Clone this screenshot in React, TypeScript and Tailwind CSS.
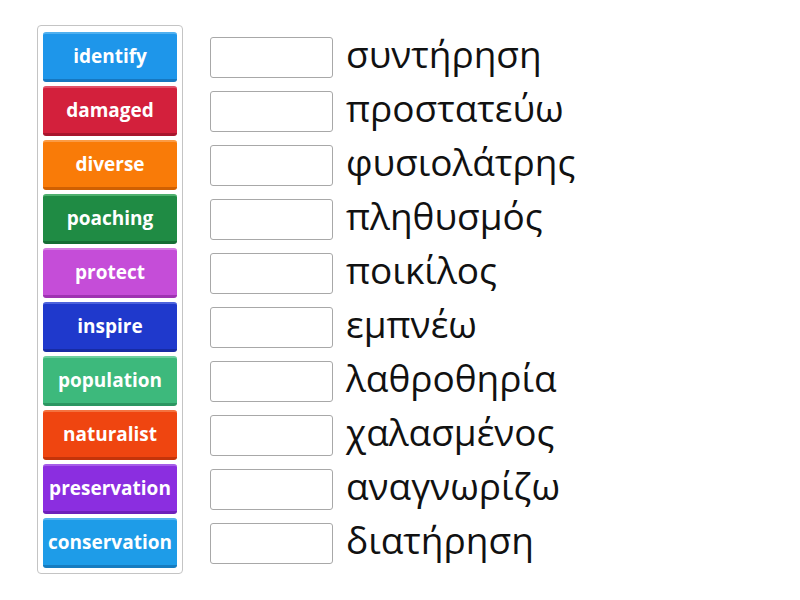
import React from 'react'

const words = [
  { label: 'identify', bg: 'bg-[#1e96ea]', top: 'border-t-[#4fb0f0]', bottom: 'border-b-[#1677c0]' },
  { label: 'damaged', bg: 'bg-[#d3203c]', top: 'border-t-[#e05067]', bottom: 'border-b-[#a8152d]' },
  { label: 'diverse', bg: 'bg-[#f97b08]', top: 'border-t-[#fb9b45]', bottom: 'border-b-[#d06002]' },
  { label: 'poaching', bg: 'bg-[#1f8b44]', top: 'border-t-[#4fb06e]', bottom: 'border-b-[#156c33]' },
  { label: 'protect', bg: 'bg-[#c54dd8]', top: 'border-t-[#d57ce3]', bottom: 'border-b-[#9f33b2]' },
  { label: 'inspire', bg: 'bg-[#1f39cc]', top: 'border-t-[#4d63dc]', bottom: 'border-b-[#172ba3]' },
  { label: 'population', bg: 'bg-[#3db97c]', top: 'border-t-[#6dcf9e]', bottom: 'border-b-[#2b9661]' },
  { label: 'naturalist', bg: 'bg-[#ef4510]', top: 'border-t-[#f4723f]', bottom: 'border-b-[#c4340a]' },
  { label: 'preservation', bg: 'bg-[#8b2ee0]', top: 'border-t-[#a75ee8]', bottom: 'border-b-[#6d1fbb]' },
  { label: 'conservation', bg: 'bg-[#1e9ce8]', top: 'border-t-[#52b4ef]', bottom: 'border-b-[#167cc0]' },
]

const greek = [
  'συντήρηση',
  'προστατεύω',
  'φυσιολάτρης',
  'πληθυσμός',
  'ποικίλος',
  'εμπνέω',
  'λαθροθηρία',
  'χαλασμένος',
  'αναγνωρίζω',
  'διατήρηση',
]

export default function App() {
  return (
    <div className="w-[800px] h-[600px] bg-white flex items-start pl-[37px] pt-[25px] gap-[27px] font-['Open_Sans',sans-serif]">
      <div className="w-[146px] border border-[#c4c4c4] rounded-[4px] bg-white px-[5px] pt-[6px] pb-[5px] flex flex-col gap-1">
        {words.map((w) => (
          <div
            key={w.label}
            className={`h-[50px] rounded-[3px] border-t-2 border-b-[3px] flex items-center justify-center text-white font-bold text-[19px] ${w.bg} ${w.top} ${w.bottom}`}
          >
            {w.label}
          </div>
        ))}
      </div>
      <div className="flex flex-col gap-1 pt-[7px]">
        {greek.map((g) => (
          <div key={g} className="h-[50px] flex items-center gap-[13px]">
            <div className="w-[123px] h-[41px] border border-[#a8a8a8] rounded-[3px] bg-white" />
            <span className="text-[37px] leading-none text-[#111] pb-[8px]">{g}</span>
          </div>
        ))}
      </div>
    </div>
  )
}
